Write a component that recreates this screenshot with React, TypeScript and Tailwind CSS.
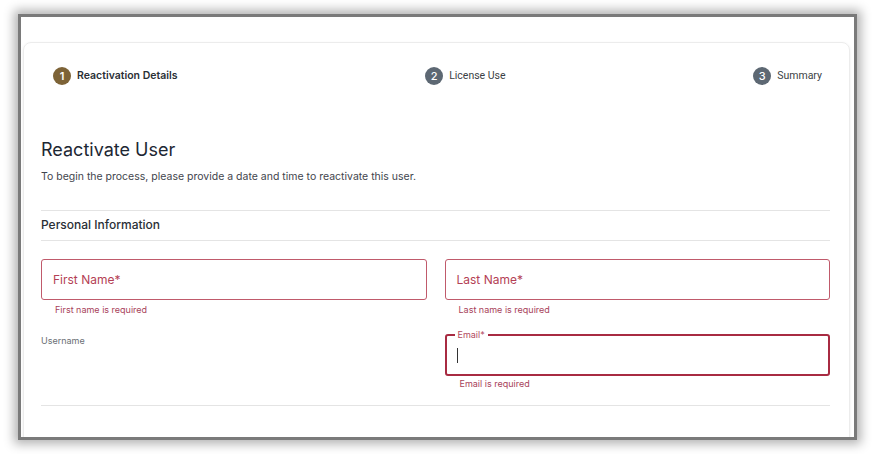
import React from "react";

const inter = { fontFamily: "Inter, 'Noto Sans', sans-serif" };

function Step({ n, label, active }: { n: number; label: string; active?: boolean }) {
  return (
    <div className="flex items-center gap-[6px]">
      <span
        className={
          active
            ? "flex h-[18px] w-[18px] items-center justify-center rounded-full bg-[#7d6337] text-[11px] font-semibold text-white"
            : "flex h-[18px] w-[18px] items-center justify-center rounded-full bg-[#5d6873] text-[11px] font-medium text-white"
        }
      >
        {n}
      </span>
      <span
        className={active ? "text-[10.5px] font-semibold text-[#2a2f36]" : "text-[10.5px] text-[#3b3f45]"}
        style={active ? inter : { fontFamily: "Roboto, sans-serif" }}
      >
        {label}
      </span>
    </div>
  );
}

function OutlinedField({ label, error }: { label: string; error: string }) {
  return (
    <div className="flex flex-col">
      <div className="flex h-[41px] items-center rounded-[3px] border border-[#c05a6b] px-[11px]">
        <span className="text-[12px] text-[#b43f55]">{label}</span>
      </div>
      <span className="mt-[3px] pl-[14px] text-[9px] leading-[14px] text-[#a8425a]">{error}</span>
    </div>
  );
}

export default function App() {
  return (
    <div className="h-[454px] w-[875px] overflow-hidden bg-white pl-[18px] pt-[14px]" style={inter}>
      <div className="h-[426px] w-[839px] overflow-hidden border-[3px] border-[#7a7a7a] bg-white pl-[2px] pr-[4px] pt-[25px] shadow-[0_0_10px_4px_rgba(0,0,0,0.3)]">
        <div className="h-[420px] rounded-t-[8px] border border-[#ececec] pl-[17px] pr-[19px] pt-[24px] shadow-[0_1px_3px_rgba(0,0,0,0.08)]">
          {/* stepper */}
          <div className="ml-[12px] mr-[8px] flex items-center justify-between">
            <Step n={1} label="Reactivation Details" active />
            <Step n={2} label="License Use" />
            <Step n={3} label="Summary" />
          </div>

          <h1 className="mt-[51px] text-[18px] leading-[28px] text-[#1d2733]">Reactivate User</h1>
          <p className="mt-[5px] text-[10.5px] leading-[16px] text-[#3f454d]">
            To begin the process, please provide a date and time to reactivate this user.
          </p>

          <div className="mt-[25px] border-t border-[#e4e4e4]" />
          <h2 className="pt-[4px] text-[12px] font-medium leading-[20px] text-[#2a2f36]">Personal Information</h2>
          <div className="mt-[5px] border-t border-[#e4e4e4]" />

          <div className="mt-[18px] grid grid-cols-2 gap-x-[18px] gap-y-[17px]">
            <OutlinedField label="First Name*" error="First name is required" />
            <OutlinedField label="Last Name*" error="Last name is required" />

            <div>
              <span className="block pt-[1px] text-[9px] leading-[12px] text-[#6b6f75]">Username</span>
            </div>
            <div className="flex flex-col">
              <div className="relative flex h-[42px] items-center rounded-[3px] border-2 border-[#a82b42] px-[10px]">
                <span className="absolute -top-[7px] left-[8px] bg-white px-[3px] text-[9px] leading-[11px] text-[#b24a5e]">
                  Email*
                </span>
                <span className="h-[15px] w-px bg-[#333]" />
              </div>
              <span className="mt-[1px] pl-[15px] text-[9px] leading-[14px] text-[#a8425a]">Email is required</span>
            </div>
          </div>

          <div className="mt-[14px] border-t border-[#e4e4e4]" />
        </div>
      </div>
    </div>
  );
}
